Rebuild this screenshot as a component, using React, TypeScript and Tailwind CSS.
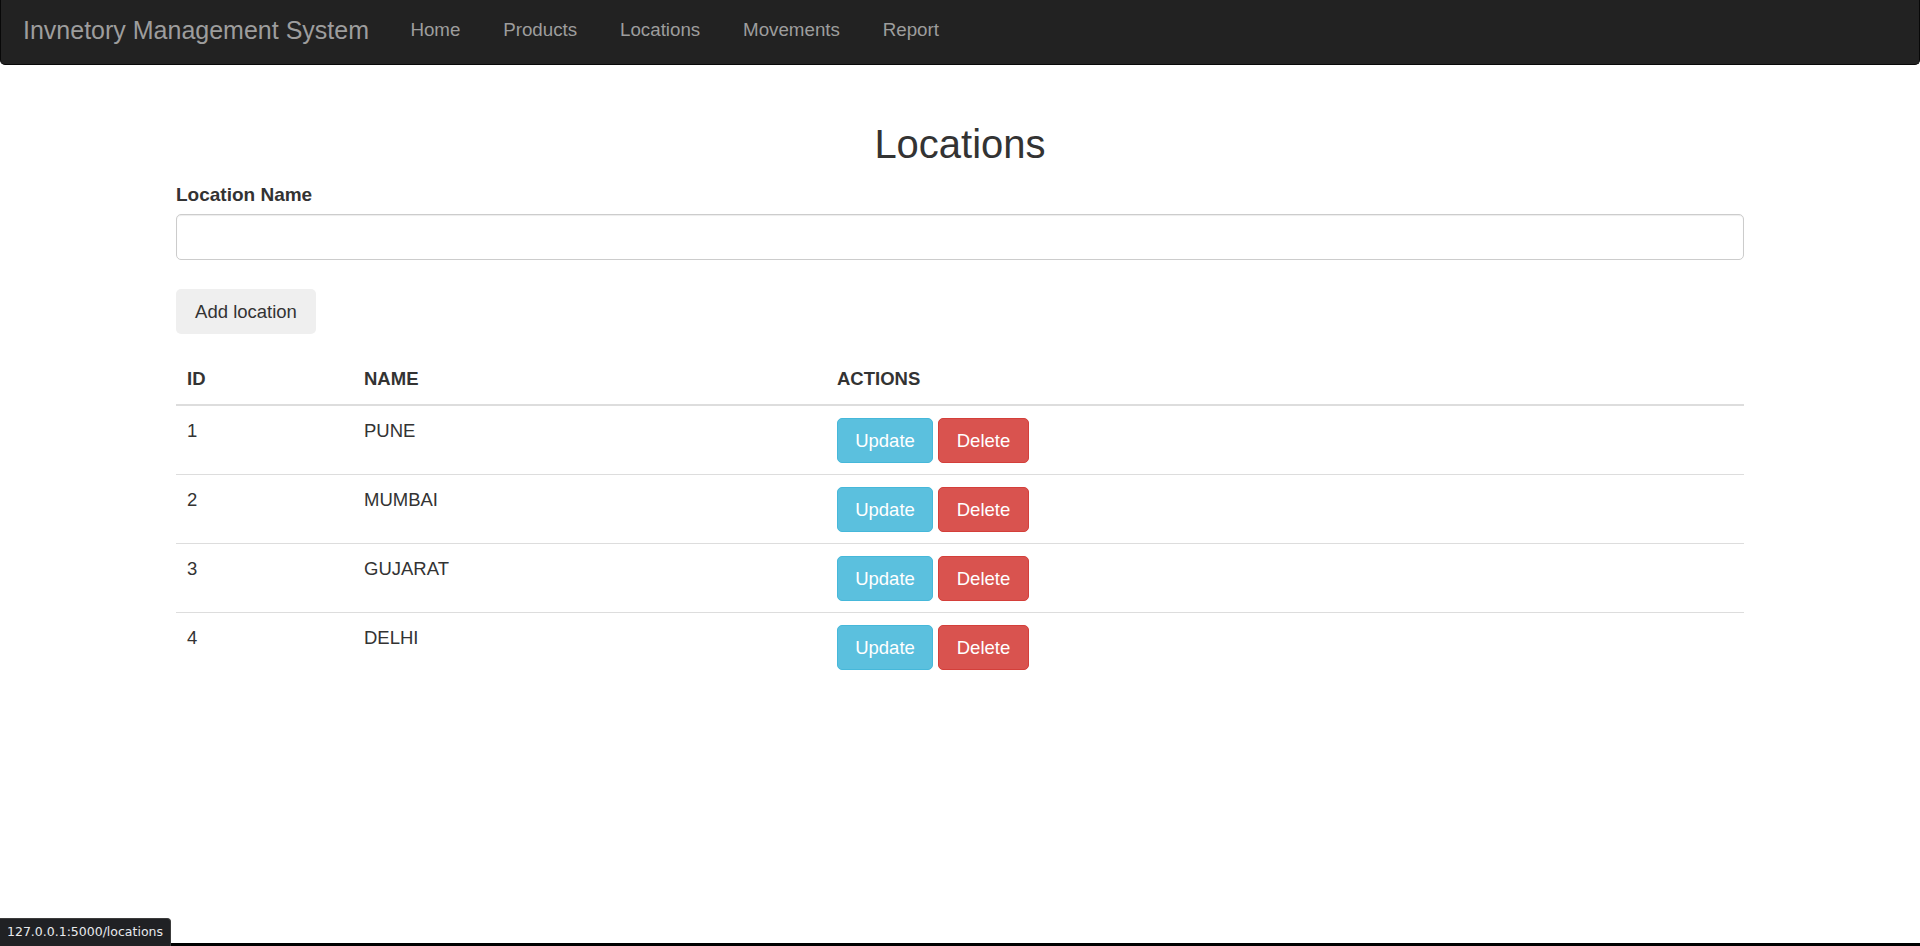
import React from "react";

interface Location {
  id: number;
  name: string;
}

const LOCATIONS: Location[] = [
  { id: 1, name: "PUNE" },
  { id: 2, name: "MUMBAI" },
  { id: 3, name: "GUJARAT" },
  { id: 4, name: "DELHI" },
];

const NAV_LINKS = ["Home", "Products", "Locations", "Movements", "Report"];

export default function App() {
  return (
    <div className="relative min-h-[946px] bg-white font-['Liberation_Sans',Arial,sans-serif] text-[#333]">
      <Navbar />
      <main className="mx-auto w-[1568px]">
        <h1 className="mt-[57px] text-center text-[40px] leading-[44px] font-normal">Locations</h1>
        <LocationForm />
        <LocationsTable locations={LOCATIONS} />
      </main>
      <StatusBubble />
    </div>
  );
}

// ─── Navbar ──────────────────────────────────────────────

function Navbar() {
  return (
    <nav className="flex h-[65px] w-full items-center rounded-b-[5px] border border-t-0 border-[#080808] bg-[#222] pb-[4px]">
      <a className="ml-[22px] text-[25px] leading-[30px] text-[#9d9d9d]">Invnetory Management System</a>
      <ul className="ml-[20px] flex">
        {NAV_LINKS.map((link) => (
          <li key={link} className="px-[21.4px] text-[18.75px] leading-[26px] text-[#9d9d9d]">
            {link}
          </li>
        ))}
      </ul>
    </nav>
  );
}

// ─── Form ────────────────────────────────────────────────

function LocationForm() {
  return (
    <form className="mt-[16px]">
      <label className="block text-[19px] leading-[26px] font-bold">Location Name</label>
      <input
        type="text"
        className="mt-[6px] block h-[46px] w-full rounded-[5px] border border-[#ccc] px-[15px] text-[18.5px] shadow-[inset_0_1px_1px_rgba(0,0,0,0.075)] outline-none"
      />
      <button
        type="button"
        className="mt-[29px] h-[45px] w-[140px] rounded-[5px] bg-[#efefef] text-[18.5px] text-[#333]"
      >
        Add location
      </button>
    </form>
  );
}

// ─── Table ───────────────────────────────────────────────

function LocationsTable({ locations }: { locations: Location[] }) {
  return (
    <table className="mt-[20px] w-full border-collapse text-[18.5px] leading-[26px]">
      <colgroup>
        <col className="w-[177px]" />
        <col className="w-[473px]" />
        <col />
      </colgroup>
      <thead>
        <tr className="border-b-2 border-[#ddd] text-left font-bold">
          <th className="px-[11px] pt-[12px] pb-[12px]">ID</th>
          <th className="px-[11px] pt-[12px] pb-[12px]">NAME</th>
          <th className="px-[11px] pt-[12px] pb-[12px]">ACTIONS</th>
        </tr>
      </thead>
      <tbody>
        {locations.map((loc, i) => (
          <tr key={loc.id} className={i < locations.length - 1 ? "border-b border-[#ddd]" : ""}>
            <td className="px-[11px] pt-[12px] pb-[11px] align-top">{loc.id}</td>
            <td className="px-[11px] pt-[12px] pb-[11px] align-top">{loc.name}</td>
            <td className="px-[11px] pt-[12px] pb-[11px] align-top">
              <div className="flex gap-[5px]">
                <button className="h-[45px] w-[96px] rounded-[5px] border border-[#46b8da] bg-[#5bc0de] text-white">
                  Update
                </button>
                <button className="h-[45px] w-[91px] rounded-[5px] border border-[#d43f3a] bg-[#d9534f] text-white">
                  Delete
                </button>
              </div>
            </td>
          </tr>
        ))}
      </tbody>
    </table>
  );
}

// ─── Browser status bubble ───────────────────────────────

function StatusBubble() {
  return (
    <>
      <div className="absolute bottom-0 left-0 flex h-[28px] w-[171px] items-center rounded-tr-[4px] border-t border-r border-[#3c3c3c] bg-[#202124] pl-[7px] font-['DejaVu_Sans',sans-serif] text-[12.5px] text-[#e8eaed]">
        127.0.0.1:5000/locations
      </div>
      <div className="absolute right-0 bottom-0 left-[171px] h-[3px] bg-black" />
    </>
  );
}
